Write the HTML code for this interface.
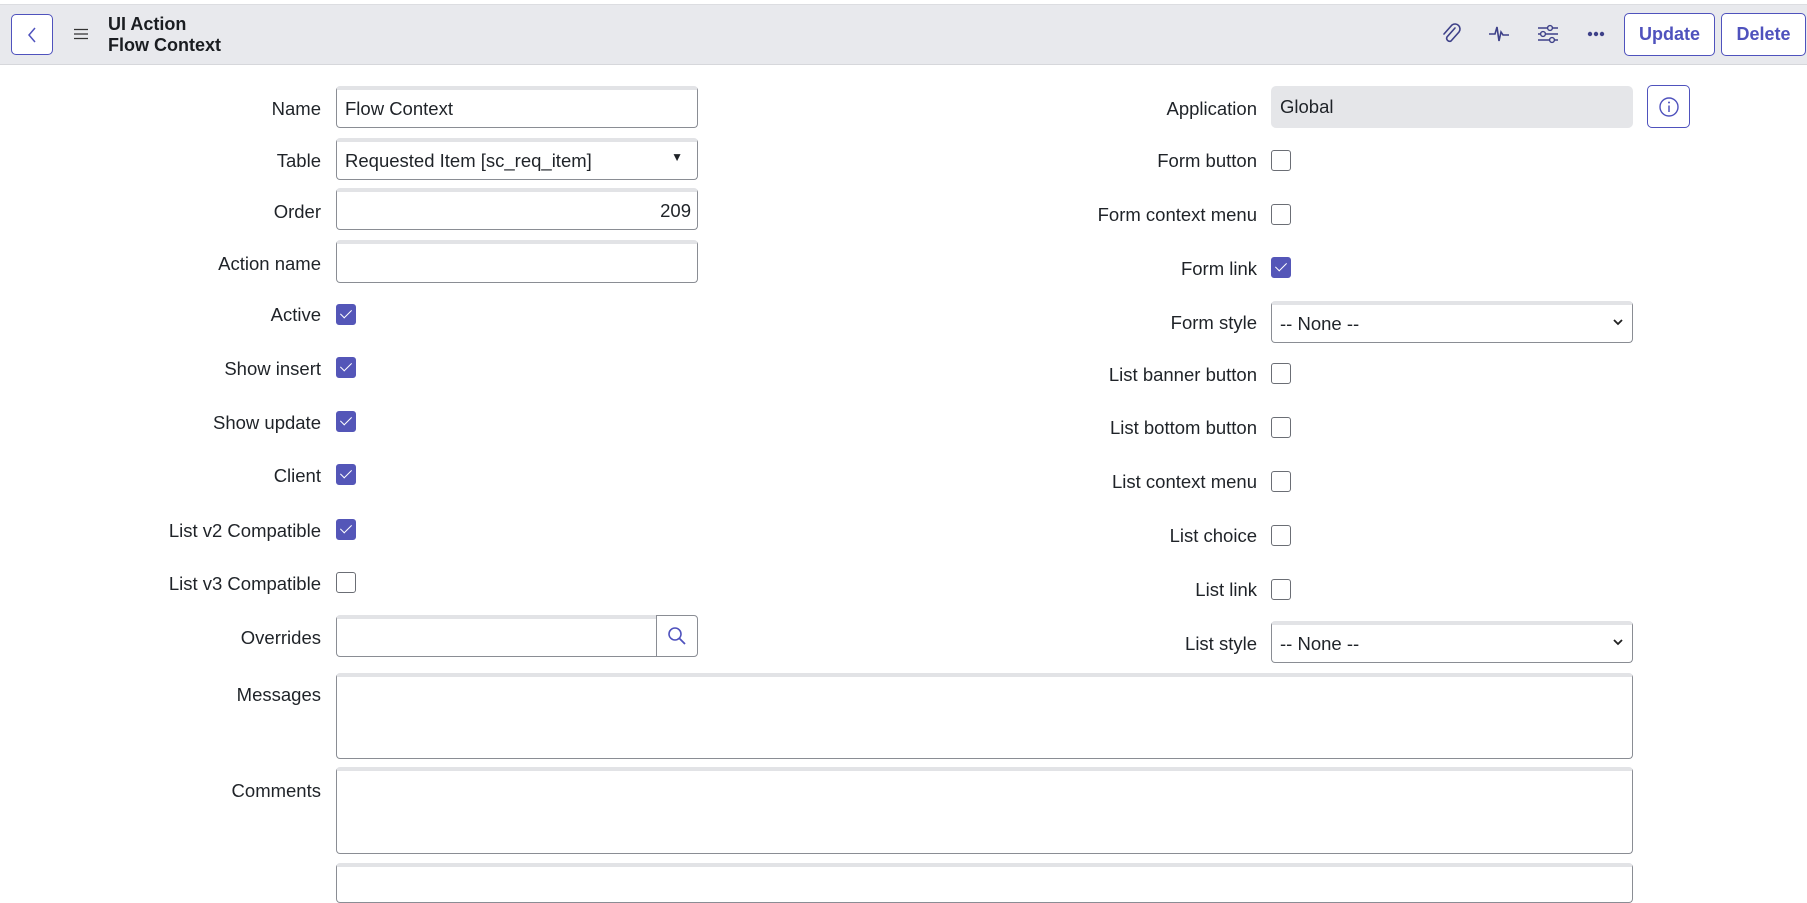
<!DOCTYPE html>
<html><head><meta charset="utf-8"><style>
*{box-sizing:border-box;margin:0;padding:0}
body{width:1807px;height:868px;overflow:hidden;background:#fff;font-family:"Liberation Sans",sans-serif;color:#1f2328;position:relative;font-size:18.5px}
.hdr{position:absolute;left:0;top:4px;width:1807px;height:61px;background:#e8e9ed;border-top:1px solid #dcdde1;border-bottom:1px solid #d6d7db}
.btn{position:absolute;border:1px solid #4f52bd;border-radius:5px;background:#fff;color:#4f52bd;font-weight:bold;font-size:18px;display:flex;align-items:center;justify-content:center}
.lbl{position:absolute;text-align:right;width:330px;font-size:18.5px;line-height:21px}
.rl{left:927px}
.ll{left:-9px}
.inp{position:absolute;border:1px solid #8a8d94;border-radius:4px;background:#fff;border-top:4px solid #e2e3e6;font-size:18.5px;padding-left:8px;display:flex;align-items:center}
.cb{position:absolute;width:20px;height:21px;border:1.5px solid #6b6e75;border-radius:3px;background:#fff}
.cb.on{background:#5456b8;border-color:#5456b8}
.cb.on::after{content:"";position:absolute;left:6px;top:2px;width:5px;height:10px;border:solid #fff;border-width:0 1.8px 1.8px 0;transform:rotate(45deg)}
</style></head><body>
<div class="hdr"></div>
<div class="btn" style="left:11px;top:14px;width:42px;height:41px"><svg width="14" height="20" viewBox="0 0 14 20"><path d="M10 3 L4 10 L10 17" fill="none" stroke="#4f52bd" stroke-width="1.5"/></svg></div>
<svg style="position:absolute;left:73px;top:28px" width="16" height="12"><path d="M1 1.5H15M1 6H15M1 10.5H15" stroke="#333" stroke-width="1.3"/></svg>
<div style="position:absolute;left:108px;top:14px;font-weight:bold;font-size:18px;line-height:21px;color:#1a1d21">UI Action<br>Flow Context</div>
<svg style="position:absolute;left:1440px;top:22px" width="22" height="24" viewBox="0 0 22 24"><path d="M15 6 L7 15 a3 3 0 0 0 4 4 L19 10 a5 5 0 0 0 -7 -7 L4 12" fill="none" stroke="#3e4189" stroke-width="1.6" stroke-linecap="round"/></svg>
<svg style="position:absolute;left:1488px;top:24px" width="22" height="20"><path d="M1 10H7L9 3L11 17L13 8L15 11H21" fill="none" stroke="#3e4189" stroke-width="1.6"/></svg>
<svg style="position:absolute;left:1537px;top:24px" width="22" height="20"><path d="M1 4H21M1 10H21M1 16H21" stroke="#3e4189" stroke-width="1.4"/><circle cx="13" cy="4" r="2.4" fill="#e8e9ed" stroke="#3e4189" stroke-width="1.4"/><circle cx="6" cy="10" r="2.4" fill="#e8e9ed" stroke="#3e4189" stroke-width="1.4"/><circle cx="15" cy="16" r="2.4" fill="#e8e9ed" stroke="#3e4189" stroke-width="1.4"/></svg>
<svg style="position:absolute;left:1587px;top:31px" width="18" height="6"><circle cx="3" cy="3" r="2.2" fill="#3e4189"/><circle cx="9" cy="3" r="2.2" fill="#3e4189"/><circle cx="15" cy="3" r="2.2" fill="#3e4189"/></svg>
<div class="btn" style="left:1624px;top:13px;width:91px;height:43px">Update</div>
<div class="btn" style="left:1721px;top:13px;width:85px;height:43px">Delete</div>

<div class="lbl ll" style="top:98px">Name</div>
<div class="inp" style="left:336px;top:86px;width:362px;height:42px">Flow Context</div>
<div class="lbl ll" style="top:150px">Table</div>
<div class="inp" style="left:336px;top:138px;width:362px;height:42px">Requested Item [sc_req_item]<span style="position:absolute;right:14px;top:8px;font-size:12px">&#9660;</span></div>
<div class="lbl ll" style="top:201px">Order</div>
<div class="inp" style="left:336px;top:188px;width:362px;height:42px;justify-content:flex-end;padding-right:6px">209</div>
<div class="lbl ll" style="top:253px">Action name</div>
<div class="inp" style="left:336px;top:240px;width:362px;height:43px"></div>

<div class="lbl ll" style="top:304px">Active</div><div class="cb on" style="left:336px;top:304px"></div>
<div class="lbl ll" style="top:358px">Show insert</div><div class="cb on" style="left:336px;top:357px"></div>
<div class="lbl ll" style="top:412px">Show update</div><div class="cb on" style="left:336px;top:411px"></div>
<div class="lbl ll" style="top:465px">Client</div><div class="cb on" style="left:336px;top:464px"></div>
<div class="lbl ll" style="top:520px">List v2 Compatible</div><div class="cb on" style="left:336px;top:519px"></div>
<div class="lbl ll" style="top:573px">List v3 Compatible</div><div class="cb" style="left:336px;top:572px"></div>
<div class="lbl ll" style="top:627px">Overrides</div>
<div class="inp" style="left:336px;top:615px;width:321px;height:42px;border-top-right-radius:0;border-bottom-right-radius:0"></div>
<div style="position:absolute;left:656px;top:615px;width:42px;height:42px;border:1px solid #8a8d94;border-radius:0 4px 4px 0;display:flex;align-items:center;justify-content:center"><svg width="20" height="20"><circle cx="8" cy="8" r="6" fill="none" stroke="#4f52bd" stroke-width="1.6"/><path d="M12.5 12.5L18 18" stroke="#4f52bd" stroke-width="1.8"/></svg></div>
<div class="lbl ll" style="top:684px">Messages</div>
<div class="inp" style="left:336px;top:673px;width:1297px;height:86px"></div>
<div class="lbl ll" style="top:780px">Comments</div>
<div class="inp" style="left:336px;top:767px;width:1297px;height:87px"></div>
<div class="inp" style="left:336px;top:863px;width:1297px;height:40px"></div>

<div class="lbl rl" style="top:98px">Application</div>
<div style="position:absolute;left:1271px;top:86px;width:362px;height:42px;background:#e5e6e9;border-radius:5px;padding-left:9px;display:flex;align-items:center;font-size:18.5px">Global</div>
<div class="btn" style="left:1647px;top:85px;width:43px;height:43px"><svg width="22" height="22"><circle cx="11" cy="11" r="9" fill="none" stroke="#4f52bd" stroke-width="1.4"/><path d="M11 9.5V16" stroke="#4f52bd" stroke-width="1.5"/><circle cx="11" cy="6.5" r="1" fill="#4f52bd"/></svg></div>
<div class="lbl rl" style="top:150px">Form button</div><div class="cb" style="left:1271px;top:150px"></div>
<div class="lbl rl" style="top:204px">Form context menu</div><div class="cb" style="left:1271px;top:204px"></div>
<div class="lbl rl" style="top:258px">Form link</div><div class="cb on" style="left:1271px;top:257px"></div>
<div class="lbl rl" style="top:312px">Form style</div>
<div class="inp" style="left:1271px;top:301px;width:362px;height:42px">-- None --<svg style="position:absolute;right:8px;top:12px" width="12" height="10"><path d="M2 3L6 7L10 3" fill="none" stroke="#222" stroke-width="1.8"/></svg></div>
<div class="lbl rl" style="top:364px">List banner button</div><div class="cb" style="left:1271px;top:363px"></div>
<div class="lbl rl" style="top:417px">List bottom button</div><div class="cb" style="left:1271px;top:417px"></div>
<div class="lbl rl" style="top:471px">List context menu</div><div class="cb" style="left:1271px;top:471px"></div>
<div class="lbl rl" style="top:525px">List choice</div><div class="cb" style="left:1271px;top:525px"></div>
<div class="lbl rl" style="top:579px">List link</div><div class="cb" style="left:1271px;top:579px"></div>
<div class="lbl rl" style="top:633px">List style</div>
<div class="inp" style="left:1271px;top:621px;width:362px;height:42px">-- None --<svg style="position:absolute;right:8px;top:12px" width="12" height="10"><path d="M2 3L6 7L10 3" fill="none" stroke="#222" stroke-width="1.8"/></svg></div>
</body></html>
